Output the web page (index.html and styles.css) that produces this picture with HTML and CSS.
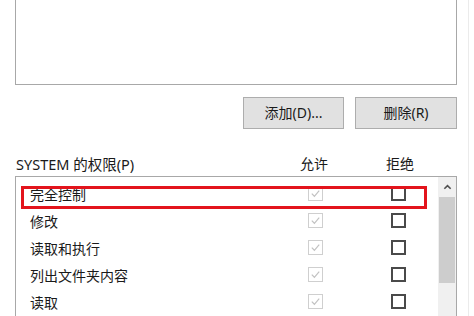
FILE: index.html
```html
<!DOCTYPE html>
<html lang="zh-CN">
<head>
<meta charset="utf-8">
<title>SYSTEM 的权限</title>
<link rel="stylesheet" href="styles.css">
</head>
<body>
<div class="dialog">
  <div class="group-list"></div>

  <div class="button-row">
    <button class="btn btn-add">添加(D)...</button>
    <button class="btn btn-remove">删除(R)</button>
  </div>

  <div class="perm-header">
    <span class="perm-title">SYSTEM 的权限(P)</span>
    <span class="col-head">允许</span>
    <span class="col-gap"></span>
    <span class="col-head">拒绝</span>
  </div>

  <div class="perm-list">
    <div class="perm-rows">
      <div class="perm-row">
        <span class="perm-name">完全控制</span>
        <span class="cell"><span class="cb cb-allow"><svg viewBox="0 0 14 14"><path d="M3 7.2 L5.8 10 L11 3.8"/></svg></span></span>
        <span class="col-gap"></span>
        <span class="cell"><span class="cb cb-deny"></span></span>
      </div>
      <div class="perm-row">
        <span class="perm-name">修改</span>
        <span class="cell"><span class="cb cb-allow"><svg viewBox="0 0 14 14"><path d="M3 7.2 L5.8 10 L11 3.8"/></svg></span></span>
        <span class="col-gap"></span>
        <span class="cell"><span class="cb cb-deny"></span></span>
      </div>
      <div class="perm-row">
        <span class="perm-name">读取和执行</span>
        <span class="cell"><span class="cb cb-allow"><svg viewBox="0 0 14 14"><path d="M3 7.2 L5.8 10 L11 3.8"/></svg></span></span>
        <span class="col-gap"></span>
        <span class="cell"><span class="cb cb-deny"></span></span>
      </div>
      <div class="perm-row">
        <span class="perm-name">列出文件夹内容</span>
        <span class="cell"><span class="cb cb-allow"><svg viewBox="0 0 14 14"><path d="M3 7.2 L5.8 10 L11 3.8"/></svg></span></span>
        <span class="col-gap"></span>
        <span class="cell"><span class="cb cb-deny"></span></span>
      </div>
      <div class="perm-row">
        <span class="perm-name">读取</span>
        <span class="cell"><span class="cb cb-allow"><svg viewBox="0 0 14 14"><path d="M3 7.2 L5.8 10 L11 3.8"/></svg></span></span>
        <span class="col-gap"></span>
        <span class="cell"><span class="cb cb-deny"></span></span>
      </div>
    </div>
    <div class="scrollbar">
      <div class="sb-arrow"><svg viewBox="0 0 10 6"><path d="M1.5 5 L5 1.5 L8.5 5"/></svg></div>
      <div class="sb-thumb"></div>
      <div class="sb-track"></div>
    </div>
  </div>

  <div class="highlight"></div>
</div>
</body>
</html>
```

FILE: styles.css
```css
html, body {
  margin: 0;
  padding: 0;
}

body {
  width: 474px;
  height: 316px;
  overflow: hidden;
  background: #ffffff;
  font-family: "Noto Sans", "Noto Sans CJK SC", sans-serif;
  font-size: 14px;
  color: #1a1a1a;
}

.dialog {
  position: relative;
  box-sizing: border-box;
  width: 469px;
  height: 316px;
  overflow: hidden;
  padding-left: 15px;
  padding-right: 11px;
  border-right: 1px solid #ebebeb;
  display: flex;
  flex-direction: column;
}

.group-list {
  box-sizing: border-box;
  width: 442px;
  height: 85px;
  flex: none;
  border: 1px solid #a8a8a8;
  border-top: none;
  background: #ffffff;
}

.button-row {
  display: flex;
  justify-content: flex-end;
  gap: 11px;
  width: 442px;
  margin-top: 12px;
  flex: none;
}

.btn {
  box-sizing: border-box;
  height: 32px;
  border: 1px solid #adadad;
  background: #e1e1e1;
  font-family: "Noto Sans", "Noto Sans CJK SC", sans-serif;
  font-size: 14px;
  color: #1a1a1a;
  padding: 0;
  line-height: 30px;
}

.btn-add {
  width: 101px;
}

.btn-remove {
  width: 102px;
}

.perm-header {
  display: grid;
  grid-template-columns: 283px 30px 56px 30px;
  align-items: center;
  height: 20px;
  line-height: 20px;
  margin-top: 25px;
  padding-left: 1px;
  flex: none;
}

.perm-title {
  font-size: 14.5px;
  white-space: nowrap;
}

.col-head {
  text-align: center;
  white-space: nowrap;
}

.perm-list {
  box-sizing: border-box;
  width: 442px;
  height: 140px;
  margin-top: 2px;
  border: 1px solid #a8a8a8;
  border-bottom: none;
  display: flex;
  flex: none;
  overflow: hidden;
}

.perm-rows {
  flex: 1;
  padding-top: 3px;
}

.perm-row {
  display: grid;
  grid-template-columns: 270px 30px 53px 30px;
  align-items: center;
  height: 27px;
  padding-left: 14px;
}

.perm-name {
  white-space: nowrap;
}

.cell {
  display: flex;
  justify-content: center;
  align-items: center;
}

.cb {
  box-sizing: border-box;
  width: 15px;
  height: 15px;
  display: block;
  background: #ffffff;
}

.cb-allow {
  border: 1px solid #cfcfcf;
}

.cb-allow svg {
  display: block;
  width: 13px;
  height: 13px;
  fill: none;
  stroke: #c2c2c2;
  stroke-width: 1.3;
}

.cb-deny {
  border: 2px solid #4a4a4a;
}

.scrollbar {
  width: 18px;
  flex: none;
  display: flex;
  flex-direction: column;
  background: #f0f0f0;
}

.sb-arrow {
  height: 20px;
  display: flex;
  justify-content: center;
  align-items: center;
  background: #f0f0f0;
}

.sb-arrow svg {
  width: 9px;
  height: 6px;
  fill: none;
  stroke: #505050;
  stroke-width: 1.8;
}

.sb-thumb {
  height: 86px;
  background: #cdcdcd;
  margin: 0 1px;
}

.sb-track {
  flex: 1;
}

.highlight {
  position: absolute;
  left: 21px;
  top: 186px;
  width: 406px;
  height: 23px;
  box-sizing: border-box;
  border: 3px solid #e3141c;
  pointer-events: none;
}
```
